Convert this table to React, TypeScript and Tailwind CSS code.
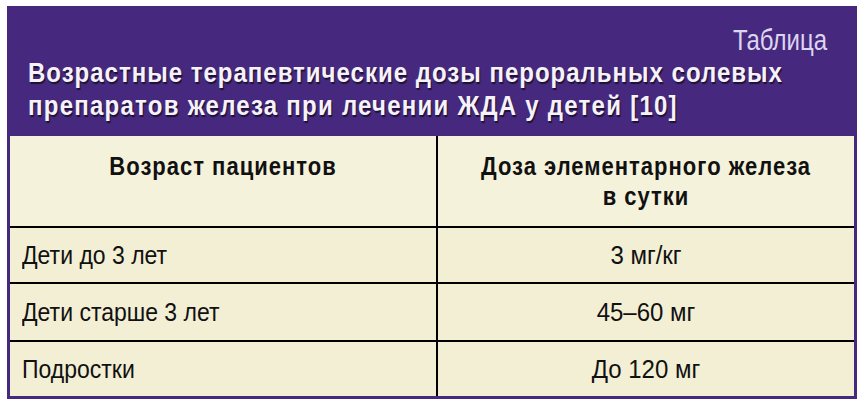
import type { ReactNode } from "react";
import clsx from "clsx";

const rows = [
  { age: "Дети до 3 лет", dose: "3 мг/кг" },
  { age: "Дети старше 3 лет", dose: "45–60 мг" },
  { age: "Подростки", dose: "До 120 мг" },
];

// tall narrow face of the print: Liberation Sans stretched upward
function Tall({ children, className }: { children: ReactNode; className?: string }) {
  return <span className={clsx("inline-block whitespace-nowrap", className)}>{children}</span>;
}

export default function App() {
  return (
    <div className="h-[402px] w-[858px] bg-white pl-[7px] pt-[6px] font-['Liberation_Sans',Arial,sans-serif]">
      <div className="flex h-[393px] w-[850px] flex-col bg-[#46297e]">
        {/* title */}
        <div className="h-[130px] shrink-0 pt-[18px]">
          <div className="pr-[30px] text-right text-[24px] leading-[32px] text-[#dcd5f0]">
            <Tall className="scale-y-[1.22]">Таблица</Tall>
          </div>
          <div className="pl-[21px] text-[24px] font-bold leading-[33px] text-[#f6f2fb] [text-shadow:1px_1px_1px_rgba(0,0,0,0.6)]">
            <div>
              <Tall className="scale-y-[1.16] tracking-[1px]">Возрастные терапевтические дозы пероральных солевых</Tall>
            </div>
            <div>
              <Tall className="scale-y-[1.16] tracking-[1.25px]">препаратов железа при лечении ЖДА у детей [10]</Tall>
            </div>
          </div>
        </div>

        {/* table */}
        <div className="flex-1 px-[3px] pb-[3px]">
          <div className="flex h-full flex-col bg-[#f3efd5] text-[#111]">
            <div className="grid h-[92px] grid-cols-[428px_1fr] border-b-2 border-black bg-[#f5f2dc] text-[22px] font-bold leading-[30px] tracking-[1px]">
              <div className="border-r-2 border-black pt-[16px] text-center">
                <Tall className="scale-y-[1.2]">Возраст пациентов</Tall>
              </div>
              <div className="pt-[16px] text-center">
                <div>
                  <Tall className="scale-y-[1.2]">Доза элементарного железа</Tall>
                </div>
                <div>
                  <Tall className="scale-y-[1.2]">в сутки</Tall>
                </div>
              </div>
            </div>
            {rows.map((r, i) => (
              <div
                key={r.age}
                className={clsx(
                  "grid grid-cols-[428px_1fr] leading-[30px]",
                  i === 0 && "h-[56px] border-b-2 border-black",
                  i === 1 && "h-[58px] border-b-2 border-black",
                  i === 2 && "flex-1"
                )}
              >
                <div className="flex items-center border-r-2 border-black pl-[12px] text-[23px]">
                  <Tall className="scale-y-[1.14]">{r.age}</Tall>
                </div>
                <div className="flex items-center justify-center text-[24px]">
                  <Tall className="scale-y-[1.1]">{r.dose}</Tall>
                </div>
              </div>
            ))}
          </div>
        </div>
      </div>
    </div>
  );
}
